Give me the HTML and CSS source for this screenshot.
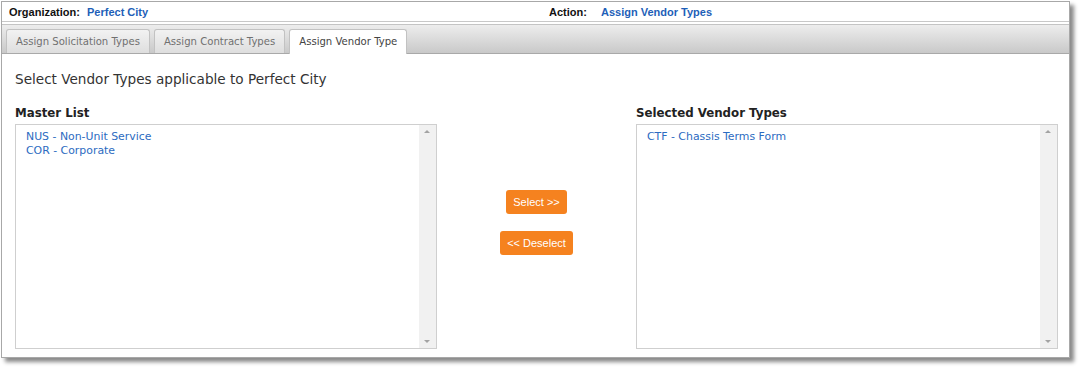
FILE: index.html
```html
<html>
<head>
<link rel="stylesheet" href="styles.css">
</head>
<body>
<div class="frame">
	<div class="infoBar">
		<div class="infoCell"><span class="infoLabel orgLabel">Organization:</span><span class="infoValue">Perfect City</span></div>
		<div class="infoCell"><span class="infoLabel actionLabel">Action:</span><span class="infoValue">Assign Vendor Types</span></div>
	</div>
	<div class="tabBar">
		<div class="tab">Assign Solicitation Types</div>
		<div class="tab">Assign Contract Types</div>
		<div class="tab active">Assign Vendor Type</div>
	</div>
	<div class="contentArea">
		<div class="pageTitle">Select Vendor Types applicable to Perfect City</div>
		<div class="pickers">
			<div class="listCol">
				<div class="listHead">Master List</div>
				<div class="listBox">
					<div class="listItems">
						<div class="listItem">NUS - Non-Unit Service</div>
						<div class="listItem">COR - Corporate</div>
					</div>
					<div class="scrollBar"><span class="arrowUp"></span><span class="arrowDown"></span></div>
				</div>
			</div>
			<div class="buttonCol">
				<button class="orangeBtn">Select &gt;&gt;</button>
				<button class="orangeBtn">&lt;&lt; Deselect</button>
			</div>
			<div class="listCol">
				<div class="listHead">Selected Vendor Types</div>
				<div class="listBox">
					<div class="listItems">
						<div class="listItem">CTF - Chassis Terms Form</div>
					</div>
					<div class="scrollBar"><span class="arrowUp"></span><span class="arrowDown"></span></div>
				</div>
			</div>
		</div>
	</div>
</div>
</body>
</html>
```

FILE: styles.css
```css
* {
	box-sizing: border-box;
}

body {
	margin: 0;
	background-color: white;
	font-family: "DejaVu Sans", Verdana, sans-serif;
}

.frame {
	margin: 1px 0 0 1px;
	width: 1069px;
	height: 357px;
	border: 1px solid #a8a8a8;
	box-shadow: 4px 4px 4px #8a8a8a;
	background-color: white;
	display: flex;
	flex-direction: column;
}

.infoBar {
	display: flex;
	height: 20px;
	border-bottom: 1px solid #c8c8c8;
	font-family: "Liberation Sans", Arial, sans-serif;
	font-size: 11px;
	font-weight: bold;
	align-items: center;
}

.infoCell {
	flex: none;
	width: 540px;
	padding-left: 7px;
}

.infoCell + .infoCell {
	flex: 1;
	width: auto;
}

.infoLabel {
	display: inline-block;
	color: #111;
}

.orgLabel {
	width: 78px;
}

.actionLabel {
	width: 52px;
}

.infoValue {
	color: #1e5fb8;
}

.tabBar {
	margin-top: 2px;
	height: 30px;
	border-top: 1px solid #c4c4c4;
	border-bottom: 1px solid #a9a9a9;
	background: linear-gradient(#ededed, #c9c9c9);
	display: flex;
	align-items: flex-end;
	gap: 4px;
	padding-left: 4px;
}

.tab {
	height: 24px;
	line-height: 23px;
	padding: 0 9px;
	border: 1px solid #c2c2c2;
	border-bottom: none;
	border-radius: 3px 3px 0 0;
	background: linear-gradient(#f2f2f2, #dedede);
	color: #707070;
	font-size: 10.1px;
}

.tab.active {
	background: white;
	color: #444;
	margin-bottom: -1px;
	height: 25px;
}

.contentArea {
	padding: 17px 11px 0 13px;
}

.pageTitle {
	font-size: 13.6px;
	color: #333;
}

.pickers {
	display: flex;
	margin-top: 19px;
}

.listCol {
	width: 422px;
}

.listHead {
	font-size: 11.8px;
	font-weight: bold;
	color: #222;
	margin-bottom: 4px;
}

.listBox {
	height: 225px;
	border: 1px solid #cfcfcf;
	display: flex;
}

.listItems {
	flex: 1;
	padding: 5px 10px;
}

.listItem {
	font-size: 10.9px;
	line-height: 14px;
	color: #2c6bc1;
}

.scrollBar {
	width: 17px;
	background-color: #f1f1f1;
	position: relative;
}

.arrowUp, .arrowDown {
	position: absolute;
	left: 5px;
	width: 0;
	height: 0;
	border-left: 3px solid transparent;
	border-right: 3px solid transparent;
}

.arrowUp {
	top: 5px;
	border-bottom: 3px solid #a3a3a3;
}

.arrowDown {
	bottom: 5px;
	border-top: 3px solid #a3a3a3;
}

.buttonCol {
	width: 199px;
	display: flex;
	flex-direction: column;
	align-items: center;
	padding-top: 84px;
	gap: 17px;
}

.orangeBtn {
	background-color: #f5821f;
	color: white;
	border: none;
	border-radius: 3px;
	font-family: "Liberation Sans", Arial, sans-serif;
	font-size: 11px;
	height: 24px;
	padding: 0 7px;
}
```
